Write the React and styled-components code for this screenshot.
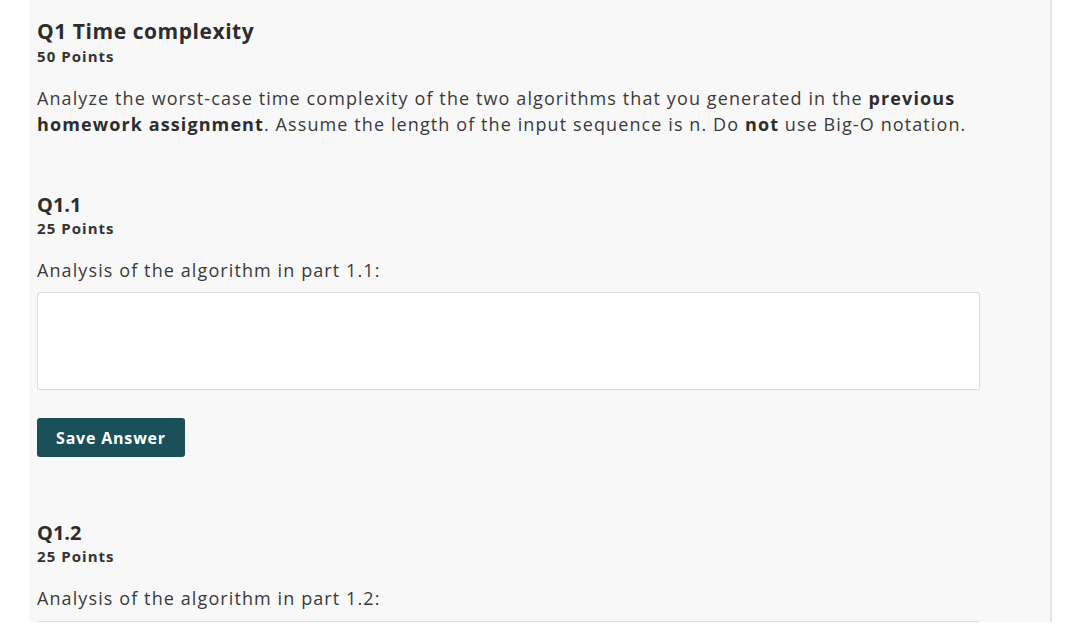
import React from "react";
import styled, { createGlobalStyle } from "styled-components";

const Global = createGlobalStyle`
  html, body { margin: 0; padding: 0; background: #ffffff; }
  body { font-family: "Open Sans", "Noto Sans", sans-serif; color: #333333; }
`;

const Page = styled.div`
  width: 1068px;
  height: 634px;
  background: #ffffff;
  overflow: hidden;
`;

const Panel = styled.main`
  margin-left: 30px;
  width: 1022px;
  height: 622px;
  background: #f8f8f8;
  border-right: 2px solid #e6e6e6;
  overflow: hidden;
  padding: 16px 0 0 7px;
  box-sizing: border-box;
`;

const Title = styled.h2`
  margin: 0;
  font-size: 21px;
  line-height: 30px;
  font-weight: 700;
  letter-spacing: 0.55px;
  color: #2d2d2d;
`;

const SubTitle = styled.h3`
  margin: 0;
  font-size: 20px;
  line-height: 26px;
  font-weight: 700;
  color: #2d2d2d;
`;

const Points = styled.div`
  font-size: 15px;
  line-height: 20px;
  font-weight: 700;
  letter-spacing: 1.05px;
  color: #333333;
`;

const Prompt = styled.p`
  margin: 19px 0 0;
  font-size: 18px;
  line-height: 26px;
  color: #3a3a3a;
  letter-spacing: 1.1px;
  b { font-weight: 700; color: #2d2d2d; }
`;

const Section = styled.section`
  margin-top: ${(p) => p.$mt}px;
`;

const AnswerBox = styled.textarea`
  display: block;
  margin-top: ${(p) => p.$mt || 9}px;
  width: 943px;
  height: 98px;
  box-sizing: border-box;
  border: 1px solid #dcdcdc;
  border-radius: 2px;
  background: #ffffff;
  resize: none;
  outline: none;
  font-family: inherit;
`;

const SaveButton = styled.button`
  display: block;
  margin-top: 28px;
  width: 148px;
  height: 39px;
  padding: 0;
  background: #1b4f5a;
  color: #ffffff;
  border: none;
  border-radius: 3px;
  font-family: "Open Sans", "Noto Sans", sans-serif;
  font-size: 16px;
  font-weight: 700;
  letter-spacing: 0.8px;
  cursor: pointer;
`;

export default function App() {
  return (
    <Page>
      <Global />
      <Panel>
        <Title>Q1 Time complexity</Title>
        <Points>50 Points</Points>
        <Prompt>
          Analyze the worst-case time complexity of the two algorithms that you generated in the <b>previous</b>
          <br />
          <b>homework assignment</b>. Assume the length of the input sequence is n. Do <b>not</b> use Big-O notation.
        </Prompt>

        <Section $mt={55}>
          <SubTitle>Q1.1</SubTitle>
          <Points>25 Points</Points>
          <Prompt>Analysis of the algorithm in part 1.1:</Prompt>
          <AnswerBox />
          <SaveButton>Save Answer</SaveButton>
        </Section>

        <Section $mt={63}>
          <SubTitle>Q1.2</SubTitle>
          <Points>25 Points</Points>
          <Prompt>Analysis of the algorithm in part 1.2:</Prompt>
          <AnswerBox $mt={10} />
        </Section>
      </Panel>
    </Page>
  );
}
